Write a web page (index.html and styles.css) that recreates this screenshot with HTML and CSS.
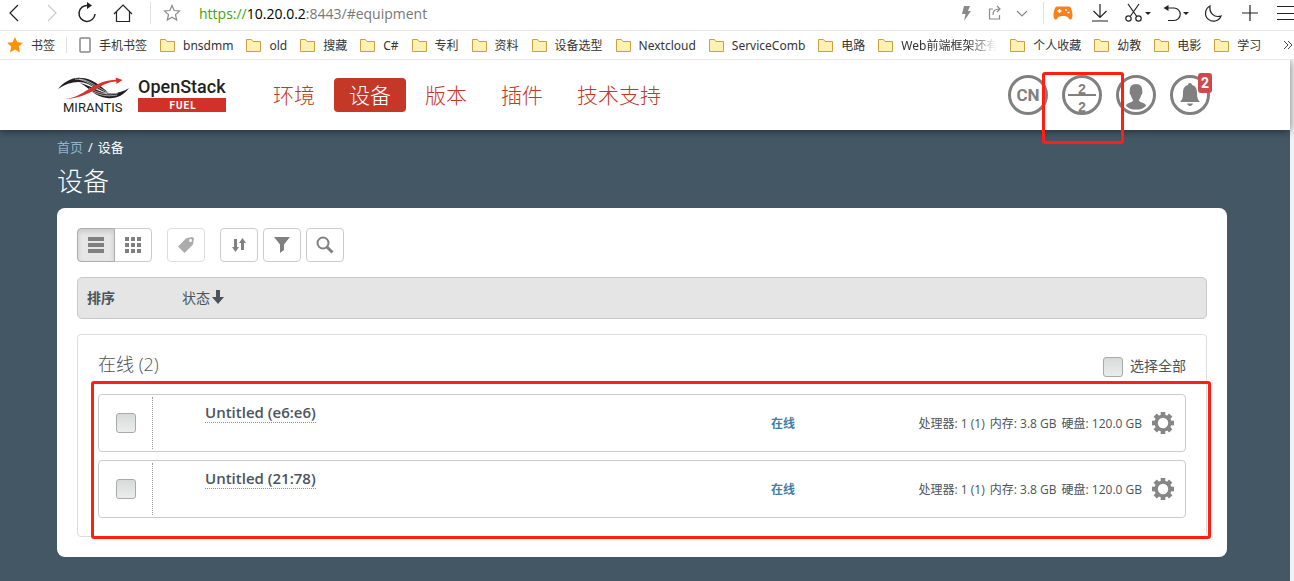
FILE: index.html
```html
<!DOCTYPE html>
<html lang="zh-CN">
<head>
    <meta charset="UTF-8">
    <meta name="viewport" content="width=device-width, initial-scale=1.0">
    <title>设备</title>
    <link rel="stylesheet" href="styles.css">
</head>
<body>

<!-- Icons used more than once -->
<svg class="sprite" aria-hidden="true">
    <symbol id="folder" viewBox="0 0 15 13">
        <path d="M.5 .5h5l1.500 2h7.500v10h-14z" fill="#fff1b4" stroke="#c9a13f"/>
    </symbol>
    <symbol id="gear" viewBox="0 0 22 22">
        <g fill="#868686">
            <rect x="8.700" y="0" width="4.600" height="22"/>
            <rect x="8.700" y="0" width="4.600" height="22" transform="rotate(45 11 11)"/>
            <rect x="8.700" y="0" width="4.600" height="22" transform="rotate(90 11 11)"/>
            <rect x="8.700" y="0" width="4.600" height="22" transform="rotate(135 11 11)"/>
            <circle cx="11" cy="11" r="8.600"/>
        </g>
        <circle cx="11" cy="11" r="5.200" fill="#fff"/>
    </symbol>
</svg>

<div class="toolbar">
    <div class="tools">
        <button aria-label="后退"><svg width="20" height="20"><path d="M13 2L5 10l8 8"/></svg></button>
        <button aria-label="前进" class="off"><svg width="20" height="20"><path d="M7 2l8 8-8 8"/></svg></button>
        <button aria-label="刷新"><svg width="20" height="20"><path d="M11 2.500A8 8 0 1 0 18 11" stroke-width="1.500"/><path d="M10 -1l5 3.500-5 3.500z" fill="#222" stroke="none"/></svg></button>
        <button aria-label="主页"><svg width="20" height="20"><path d="M1 11L10 2l9 9M3.500 9v9.500h13V9"/></svg></button>
    </div>
    <span class="line"></span>
    <div class="address">
        <button aria-label="收藏" class="gray"><svg width="18" height="18"><path d="M9 1.500l2.200 5 5.300.5-4 3.600 1.200 5.400L9 13.200 4.300 16l1.200-5.400-4-3.600 5.300-.5z"/></svg></button>
        <a href="#equipment"><span class="scheme">https://</span><span class="host">10.20.0.2</span>:8443/#equipment</a>
    </div>
    <div class="tools small gray">
        <button aria-label="极速模式"><svg width="20" height="20"><path d="M8 3h6l-2 5h3L8 18l1.500-7H6z" fill="#8a8a8a" stroke="none"/></svg></button>
        <button aria-label="分享"><svg width="20" height="20"><path d="M9 6H5.500v10h10v-4M9 12c0-4 2-6 6-6M13 3l3 3-3 3"/></svg></button>
        <button aria-label="展开"><svg width="20" height="20"><path d="M5 8l5 5 5-5"/></svg></button>
    </div>
    <span class="line"></span>
    <div class="tools actions">
        <button aria-label="游戏"><svg width="20" height="20"><path d="M4 3.500h12c2 0 3.500 5 3.500 9 0 5-3 5-4.500 2-1-2-9-2-10 0-1.500 3-4.500 3-4.500-2 0-4 1.500-9 3.500-9z" fill="#f8801f" stroke="none"/><path d="M4.500 8h4M6.500 6v4M12 7h2M14.500 9.500h2" stroke="#fff" stroke-width="1.500"/></svg></button>
        <button aria-label="下载"><svg width="20" height="20"><path d="M10 1v13M3.500 8l6.500 6.500L16.500 8M2 18h16"/></svg></button>
        <button aria-label="截图" class="more"><svg width="20" height="20"><path d="M4 1l8.500 12M15 1L6.500 13"/><circle cx="4.500" cy="15.500" r="2.700"/><circle cx="14.500" cy="15.500" r="2.700"/></svg></button>
        <button aria-label="恢复" class="more"><svg width="20" height="20"><path d="M3 5h9a6 6 0 0 1 0 12.500H6"/><path d="M1.500 5l5-3v6z" fill="#222" stroke="none"/></svg></button>
        <button aria-label="夜间模式"><svg width="20" height="20"><path d="M7 3a8 8 0 1 0 11 10C11 15 6 10 7 3z"/></svg></button>
        <button aria-label="添加"><svg width="20" height="20"><path d="M10 2v16M2 10h16"/></svg></button>
        <button aria-label="菜单" class="last"><svg width="17" height="20"><path d="M0 3.500h17M0 10.500h17M0 16.500h17"/></svg></button>
    </div>
</div>

<nav class="bookmarks">
    <a href="#"><svg width="16" height="16"><path d="M8 0l2.300 5.300 5.700.5-4.300 3.800L13 15.500l-5-3-5 3 1.300-5.900L0 5.800l5.700-.5z" fill="#ff9000"/></svg>书签</a>
    <span class="line"></span>
    <a href="#"><svg width="12" height="16"><rect x="1" y="1" width="10" height="14" rx="1" fill="none" stroke="#888" stroke-width="1.500"/></svg>手机书签</a>
    <a href="#"><svg width="15" height="13"><use href="#folder"/></svg>bnsdmm</a>
    <a href="#"><svg width="15" height="13"><use href="#folder"/></svg>old</a>
    <a href="#"><svg width="15" height="13"><use href="#folder"/></svg>搜藏</a>
    <a href="#"><svg width="15" height="13"><use href="#folder"/></svg>C#</a>
    <a href="#"><svg width="15" height="13"><use href="#folder"/></svg>专利</a>
    <a href="#"><svg width="15" height="13"><use href="#folder"/></svg>资料</a>
    <a href="#"><svg width="15" height="13"><use href="#folder"/></svg>设备选型</a>
    <a href="#"><svg width="15" height="13"><use href="#folder"/></svg>Nextcloud</a>
    <a href="#"><svg width="15" height="13"><use href="#folder"/></svg>ServiceComb</a>
    <a href="#"><svg width="15" height="13"><use href="#folder"/></svg>电路</a>
    <a href="#"><svg width="15" height="13"><use href="#folder"/></svg><span class="fade">Web前端框架还有</span></a>
    <a href="#"><svg width="15" height="13"><use href="#folder"/></svg>个人收藏</a>
    <a href="#"><svg width="15" height="13"><use href="#folder"/></svg>幼教</a>
    <a href="#"><svg width="15" height="13"><use href="#folder"/></svg>电影</a>
    <a href="#"><svg width="15" height="13"><use href="#folder"/></svg>学习</a>
    <button aria-label="更多书签"><svg width="10" height="10"><path d="M1 1l4 4-4 4M5 1l4 4-4 4" fill="none" stroke="#444"/></svg></button>
</nav>

<div class="page">
    <header class="header">
        <a href="#" class="logo" aria-label="Mirantis OpenStack Fuel">
            <svg width="174" height="44" viewBox="0 0 174 44">
                <path d="M1 16C8 8 16 4 24 5c11 0 18 7 28 15-10-2-15-6-21-9C22 7 11 9 1 16z" fill="#231f20"/>
                <path d="M72 15c-6 8-13 11-22 10-12-1-16-9-27-15 10 2 16 8 27 10 9 1 16-1 22-5z" fill="#231f20"/>
                <path d="M18 6c12 0 19 9 32 15M22 6c11 1 17 8 30 14M34 18c8 4 16 6 26 4M32 15c10 6 19 7 29 5" fill="none" stroke="#fff" stroke-width=".6"/>
                <path d="M8 26c20-2 26-17 48-19l3-.3-.5-2.200 7 2.500-6 4-.2-2.500C42 9 35 25 8 26z" fill="#d8302a"/>
                <text x="6" y="39" class="brand-small">MIRANTIS</text>
                <text x="81" y="20" class="brand">OpenStack</text>
                <rect x="81" y="25" width="88" height="14" fill="#d33128"/>
                <text x="126" y="36" class="brand-fuel">FUEL</text>
            </svg>
        </a>
        <nav class="menu">
            <a href="#">环境</a>
            <a href="#equipment" class="active">设备</a>
            <a href="#">版本</a>
            <a href="#">插件</a>
            <a href="#">技术支持</a>
        </nav>
        <div class="icons">
            <button class="round lang">CN</button>
            <button class="round stats"><span>2</span><span>2</span><i class="mark"></i></button>
            <button class="round" aria-label="用户"><svg width="34" height="34" viewBox="0 0 34 34"><path d="M17 6c4.500 0 6.500 3 6.200 7 .6 2-.2 3.500-1 4-.5 2.500-1.700 4-2.200 5 0 3 7 2.500 7 6-3 3-6 3.500-10 3.500S10 31 7 28c0-3.500 7-3 7-6-.5-1-1.700-2.500-2.200-5-.8-.5-1.600-2-1-4C10.500 9 12.500 6 17 6z" fill="#808080"/></svg></button>
            <button class="round" aria-label="通知"><svg width="34" height="34" viewBox="0 0 34 34"><path d="M17 5c1.200 0 2 .8 2 2 4 1 5 4 5 8 0 5 1 7 3 9H7c2-2 3-4 3-9 0-4 1-7 5-8 0-1.200.8-2 2-2zM14 25.500h6c-.5 1.500-1.500 2.500-3 2.500s-2.500-1-3-2.500z" fill="#808080"/></svg><span class="badge">2</span></button>
        </div>
    </header>

    <main class="content">
        <div class="breadcrumb"><a href="#">首页</a><span>/</span><span>设备</span></div>
        <h1>设备</h1>

        <div class="card">
            <div class="controls">
                <div class="group">
                    <button class="btn pressed" aria-label="列表"><svg width="16" height="16"><path d="M0 2h16M0 8h16M0 14h16" stroke="#808080" stroke-width="4"/></svg></button>
                    <button class="btn" aria-label="网格"><svg width="16" height="16"><path d="M0 2h16M0 8h16M0 14h16" stroke="#808080" stroke-width="4" stroke-dasharray="4 2"/></svg></button>
                </div>
                <button class="btn" aria-label="标签" disabled><svg width="18" height="18"><path d="M1 10.500L9.500 2l6-1 1.500 1.500-1 6L7.500 17zM13.500 3a1.500 1.500 0 1 0 .1 3 1.500 1.500 0 0 0-.1-3z" fill="#808080" fill-rule="evenodd"/></svg></button>
                <div class="filters">
                    <button class="btn" aria-label="排序"><svg width="16" height="16"><path d="M3 2h3v8h2l-3.500 5L1 10h2zM10 13V6H8l3.500-5L15 6h-2v7z" fill="#808080"/></svg></button>
                    <button class="btn" aria-label="过滤"><svg width="16" height="16"><path d="M0 0h16l-6 7.500V13l-4 3V7.500z" fill="#808080"/></svg></button>
                    <button class="btn" aria-label="搜索"><svg width="18" height="18"><circle cx="7" cy="7" r="5.500" fill="none" stroke="#808080" stroke-width="2"/><path d="M11 11l5.500 5.500" stroke="#808080" stroke-width="3"/></svg></button>
                </div>
            </div>

            <div class="sorters">
                <strong>排序</strong>
                <button>状态<svg width="12" height="14"><path d="M4 0h4v7h4l-6 7-6-7h4z" fill="#4c545b"/></svg></button>
            </div>

            <section class="nodes">
                <div class="nodes-head">
                    <h2>在线 (2)</h2>
                    <label><input type="checkbox">选择全部</label>
                </div>
                <div class="node">
                    <div class="check"><input type="checkbox" aria-label="Untitled (e6:e6)"></div>
                    <div class="name"><a href="#">Untitled (e6:e6)</a></div>
                    <div class="status">在线</div>
                    <div class="hardware"><span>处理器: 1 (1)</span><span>内存: 3.8 GB</span><span>硬盘: 120.0 GB</span></div>
                    <button aria-label="设置"><svg width="22" height="22"><use href="#gear"/></svg></button>
                </div>
                <div class="node">
                    <div class="check"><input type="checkbox" aria-label="Untitled (21:78)"></div>
                    <div class="name"><a href="#">Untitled (21:78)</a></div>
                    <div class="status">在线</div>
                    <div class="hardware"><span>处理器: 1 (1)</span><span>内存: 3.8 GB</span><span>硬盘: 120.0 GB</span></div>
                    <button aria-label="设置"><svg width="22" height="22"><use href="#gear"/></svg></button>
                </div>
                <i class="mark"></i>
            </section>
        </div>
    </main>
</div>

</body>
</html>
```
FILE: styles.css
```css
* {
    box-sizing: border-box;
}

body {
    margin: 0;
    min-height: 100vh;
    display: flex;
    flex-direction: column;
    font-family: "Open Sans", "Noto Sans CJK SC", sans-serif;
    font-size: 14px;
    color: #4c545b;
    overflow: hidden;
}

a {
    color: inherit;
    text-decoration: none;
}

button {
    display: flex;
    align-items: center;
    padding: 0;
    border: none;
    background: none;
    font: inherit;
    color: inherit;
    cursor: pointer;
}

svg {
    flex: none;
}

.sprite {
    position: absolute;
    width: 0;
    height: 0;
}

/* Browser bar */
.toolbar {
    display: flex;
    align-items: center;
    height: 31px;
    padding: 0 0 4px 5px;
    background: #fff;
    border-bottom: 1px solid #e8e8e8;
}

.tools {
    display: flex;
    gap: 16px;
}

.tools svg,
.address svg {
    fill: none;
    stroke: #222;
    stroke-width: 1.2;
    overflow: visible;
}

.tools .off svg {
    stroke: #ccc;
}

.tools.small {
    gap: 8px;
}

.tools.gray svg,
.address .gray svg {
    stroke: #8a8a8a;
}

.tools.actions {
    gap: 11px;
}

.actions button {
    padding: 0 3px;
}

.actions .more {
    padding: 0;
}

.more::after {
    content: "";
    margin-left: 1px;
    border: 3px solid transparent;
    border-top: 3px solid #222;
    border-bottom: none;
}

.actions .last {
    padding-right: 0;
}

.line {
    width: 1px;
    height: 22px;
    background: #e0e0e0;
}

.toolbar .line {
    margin: 0 7px 0 11px;
}

.toolbar .tools + .line {
    margin-left: 17px;
}

.toolbar .small + .line {
    margin-left: 11px;
    margin-right: 6px;
}

.address {
    display: flex;
    flex: 1;
    align-items: center;
    gap: 18px;
    padding-left: 5px;
    font-size: 14px;
    color: #777;
}

.scheme {
    color: #3aa614;
}

.host {
    color: #000;
}

.bookmarks {
    position: relative;
    z-index: 1;
    display: flex;
    align-items: center;
    gap: 13px;
    height: 29px;
    padding: 0 1px 0 7px;
    background: #fff;
    border-bottom: 1px solid #e8e8e8;
    font-family: "Noto Sans", "Noto Sans CJK SC", sans-serif;
    font-size: 12px;
    color: #333;
    white-space: nowrap;
}

.bookmarks a {
    display: flex;
    align-items: center;
    gap: 8px;
}

.bookmarks .line {
    height: 16px;
    margin: 0 -1px 0 -2px;
}

.bookmarks button {
    margin-left: auto;
}

.fade {
    width: 96px;
    overflow: hidden;
    -webkit-mask-image: linear-gradient(to right, #000 70%, transparent);
    mask-image: linear-gradient(to right, #000 70%, transparent);
}

/* Page */
.page {
    flex: 1;
    background: #435765;
    border-right: 4px solid #f1f1f1;
}

.header {
    display: flex;
    align-items: center;
    height: 70px;
    padding: 0 80px 0 57px;
    background: #fff;
    box-shadow: 0 1px 8px rgba(0, 0, 0, 0.5);
}

.logo {
    display: flex;
    margin-right: 27px;
}

.brand-small {
    font: 13px Roboto, sans-serif;
    fill: #231f20;
}

.brand {
    font: 500 18px Roboto, sans-serif;
    fill: #231f20;
}

.brand-fuel {
    font: bold 10px Roboto, sans-serif;
    letter-spacing: 1px;
    text-anchor: middle;
    fill: #fff;
}

.menu {
    display: flex;
    flex: 1;
    gap: 4px;
    font-size: 21px;
    font-weight: 300;
    color: #c53727;
}

.menu a {
    padding: 0 15px;
    line-height: 34px;
    border-radius: 4px;
}

.menu .active {
    background: #c53727;
    color: #fff;
}

.icons {
    display: flex;
    gap: 14px;
}

.round {
    position: relative;
    justify-content: center;
    width: 40px;
    height: 40px;
    border: 3px solid #808080;
    border-radius: 50%;
    color: #808080;
}

.lang {
    font: bold 17px Roboto, sans-serif;
}

.stats {
    flex-direction: column;
    justify-content: flex-start;
    z-index: 1;
    font: bold 14px "Liberation Mono", monospace;
}

.stats span {
    width: 28px;
    height: 18px;
    line-height: 24px;
}

.stats span:first-child {
    border-bottom: 2px solid #808080;
}

.badge {
    position: absolute;
    top: -5px;
    right: -5px;
    width: 14px;
    border-radius: 3px;
    background: #cc4a4d;
    color: #fff;
    font: bold 14px/20px Roboto, sans-serif;
}

.mark {
    position: absolute;
    border: 3px solid #ff2012;
    border-radius: 3px;
    pointer-events: none;
}

.stats .mark {
    top: -6px;
    left: -23px;
    width: 82px;
    height: 72px;
}

.content {
    padding: 8px 63px 24px 57px;
}

.breadcrumb {
    display: flex;
    gap: 5px;
    font-size: 13px;
    line-height: 18px;
    color: #fff;
}

.breadcrumb a {
    color: #8fb3cd;
}

h1 {
    margin: 6px 0 8px;
    font-size: 26px;
    font-weight: 300;
    line-height: 38px;
    color: #fff;
}

.card {
    padding: 20px;
    background: #fff;
    border-radius: 8px;
}

.controls {
    display: flex;
    gap: 15px;
}

.group {
    display: flex;
}

.filters {
    display: flex;
    gap: 5px;
}

.btn {
    justify-content: center;
    width: 38px;
    height: 34px;
    border: 1px solid #ccc;
    border-radius: 4px;
}

.btn:disabled {
    opacity: 0.65;
}

.group .btn:first-child {
    border-radius: 4px 0 0 4px;
}

.group .btn:last-child {
    margin-left: -1px;
    border-radius: 0 4px 4px 0;
}

.btn.pressed {
    z-index: 1;
    background: #e6e6e6;
    border-color: #adadad;
    box-shadow: inset 0 3px 5px rgba(0, 0, 0, 0.125);
}

.sorters {
    display: flex;
    align-items: center;
    gap: 67px;
    height: 42px;
    margin: 15px 0;
    padding: 0 9px 2px;
    background: #e5e5e5;
    border: 1px solid #c8c8c8;
    border-radius: 5px;
}

.sorters button {
    gap: 2px;
}

.nodes {
    position: relative;
    padding: 20px 20px 18px;
    border: 1px solid #ddd;
    border-radius: 4px;
}

.nodes .mark {
    top: 46px;
    right: -5px;
    bottom: -3px;
    left: 13px;
}

.nodes-head {
    display: flex;
    justify-content: space-between;
    height: 39px;
}

h2 {
    margin: 0;
    font-size: 18px;
    font-weight: 300;
    line-height: 18px;
}

.nodes-head label {
    display: flex;
    align-items: flex-start;
    gap: 7px;
    padding-top: 2px;
    line-height: 18px;
}

input[type="checkbox"] {
    appearance: none;
    width: 20px;
    height: 20px;
    margin: 0;
    border: 1px solid #aaa;
    border-radius: 3px;
    background: linear-gradient(#d8dada, #ececec);
}

.node {
    display: grid;
    grid-template-columns: 54px 1fr 100px 271px 43px;
    align-items: center;
    height: 58px;
    border: 1px solid #c8ccce;
    border-radius: 4px;
}

.node + .node {
    margin-top: 8px;
}

.check {
    display: flex;
    align-items: center;
    height: 52px;
    padding-left: 17px;
    border-right: 1px dotted #999;
}

.name {
    align-self: start;
    padding: 7px 0 0 52px;
}

.name a {
    display: inline-block;
    font-size: 15px;
    font-weight: 600;
    line-height: 20px;
    border-bottom: 1px dotted #8a9299;
}

.status {
    font-size: 12px;
    font-weight: bold;
    color: #427ea8;
}

.hardware {
    display: flex;
    justify-content: flex-end;
    gap: 5px;
    font-size: 12px;
}

.node button {
    padding-left: 10px;
}
```
